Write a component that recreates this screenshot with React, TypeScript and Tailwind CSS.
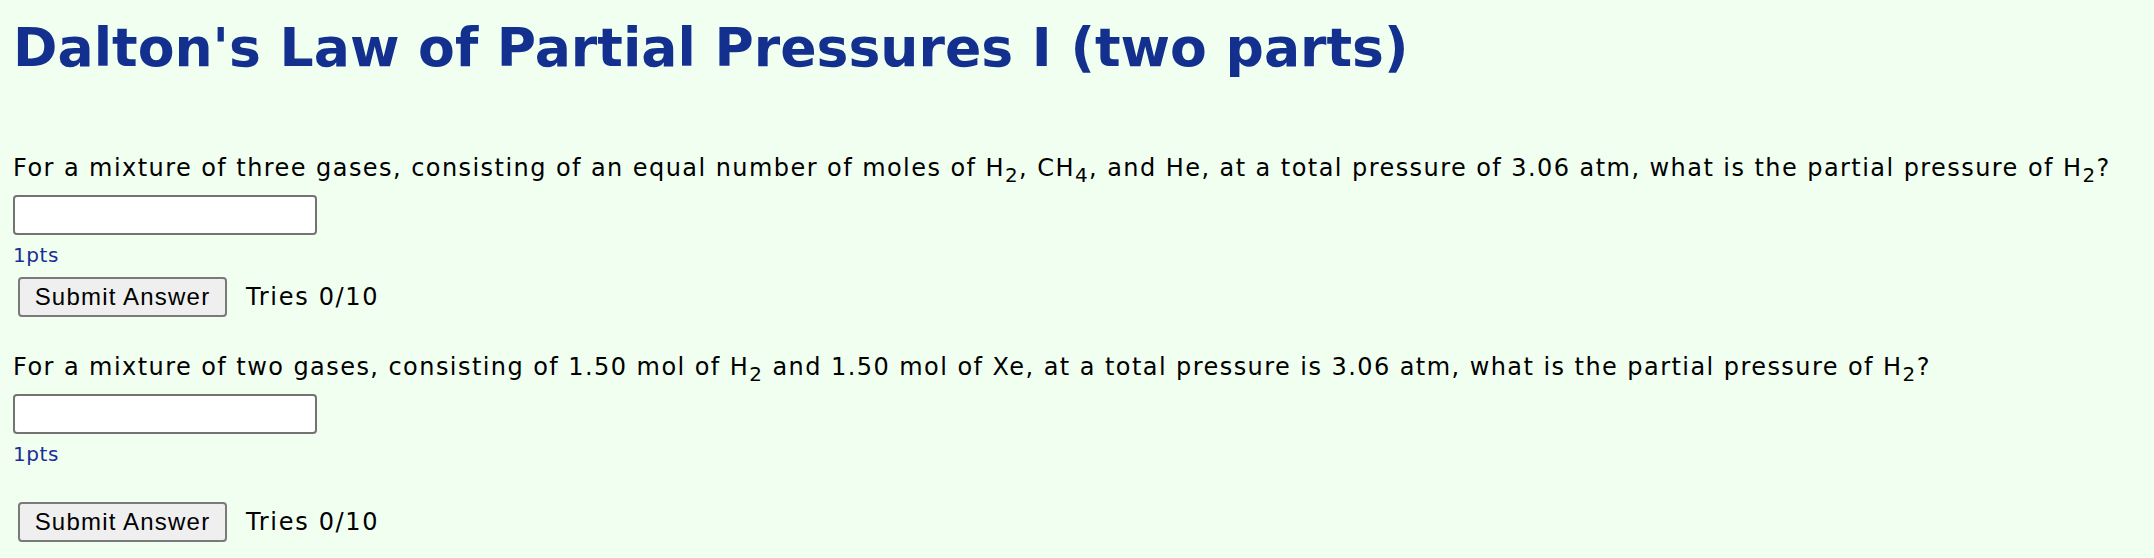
import React from 'react';

const H2 = () => (
  <>
    H<sub className="relative -bottom-[0.3em] text-[0.83em] leading-none">2</sub>
  </>
);

function Question({ children, gapBeforeButton }: { children: React.ReactNode; gapBeforeButton: string }) {
  return (
    <div>
      <p className="whitespace-nowrap text-[24px] leading-[27px] tracking-[0.06em] text-black">{children}</p>
      <input
        type="text"
        className="mt-[13px] block w-[304px] h-[40px] bg-white border-2 border-[#737373] rounded-[4px] px-2 text-[20px] outline-none"
      />
      <div className="mt-[9px] text-[20px] leading-[23px] tracking-[0.03em] text-[#1a2e96]">1pts</div>
      <div className={`${gapBeforeButton} ml-[5px] flex items-center gap-[19px]`}>
        <button
          type="button"
          className="w-[209px] h-[40px] bg-[#efefef] border-2 border-[#7a7a7a] rounded-[4px] text-[24px] tracking-[0.05em] text-black"
          style={{ fontFamily: '"Liberation Sans", Arial, sans-serif' }}
        >
          Submit Answer
        </button>
        <span className="text-[24px] tracking-[0.07em] text-black">Tries 0/10</span>
      </div>
    </div>
  );
}

export default function App() {
  return (
    <div
      className="min-h-[558px] bg-[#f0fff0] px-[13px] pt-[16px]"
      style={{ fontFamily: '"DejaVu Sans", Verdana, sans-serif' }}
    >
      <h1 className="text-[53.6px] leading-[64px] font-bold text-[#13308f]">
        Dalton's Law of Partial Pressures I (two parts)
      </h1>

      <div className="mt-[75px]">
        <Question gapBeforeButton="mt-[10px]">
          For a mixture of three gases, consisting of an equal number of moles of <H2 />, CH
          <sub className="relative -bottom-[0.3em] text-[0.83em] leading-none">4</sub>, and He, at a total pressure of
          3.06 atm, what is the partial pressure of <H2 />?
        </Question>
      </div>

      <div className="mt-[37px]">
        <Question gapBeforeButton="mt-[36px]">
          For a mixture of two gases, consisting of 1.50 mol of <H2 /> and 1.50 mol of Xe, at a total pressure is 3.06
          atm, what is the partial pressure of <H2 />?
        </Question>
      </div>
    </div>
  );
}
